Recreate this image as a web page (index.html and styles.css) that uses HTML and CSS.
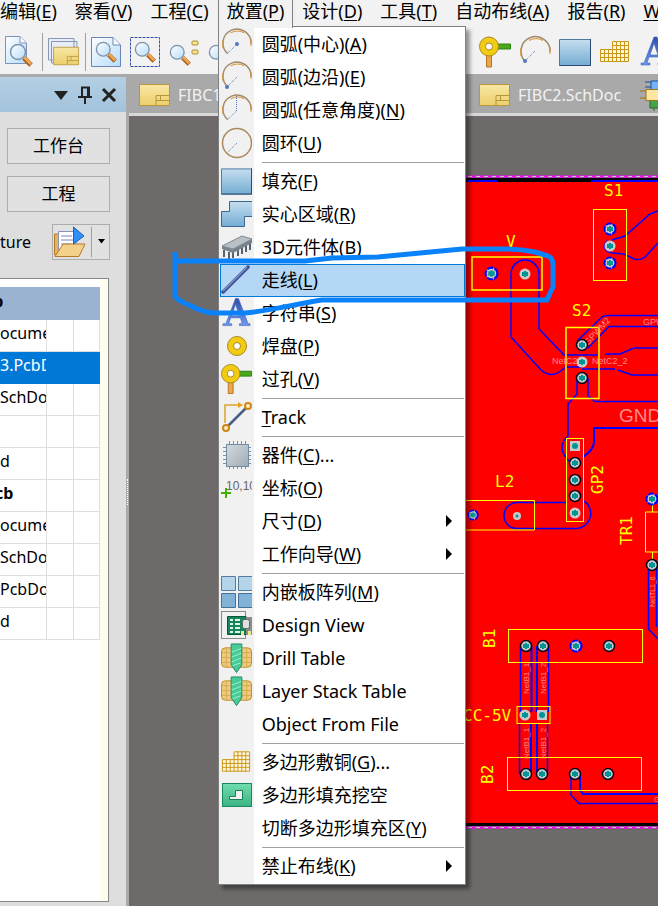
FILE: index.html
```
<!DOCTYPE html>
<html lang="zh-CN">
<head>
<meta charset="UTF-8">
<meta name="viewport" content="width=device-width, initial-scale=1.0">
<title>PCB Editor</title>
<link rel="stylesheet" href="styles.css">
</head>
<body>

<!-- shared icons -->
<svg class="defs" aria-hidden="true">
<defs>
<linearGradient id="blue" x1="0" y1="0" x2="0" y2="1"><stop offset="0" stop-color="#c5deef"/><stop offset="1" stop-color="#74add2"/></linearGradient>
<linearGradient id="sheet" x1="0" y1="0" x2="1" y2="1"><stop offset="0" stop-color="#ffffff"/><stop offset="1" stop-color="#b5dcfa"/></linearGradient>
<linearGradient id="gold" x1="0" y1="0" x2="0" y2="1"><stop offset="0" stop-color="#f8e6a4"/><stop offset="1" stop-color="#ecd06c"/></linearGradient>
<linearGradient id="green" x1="0" y1="0" x2="0" y2="1"><stop offset="0" stop-color="#72dcae"/><stop offset="1" stop-color="#3cb384"/></linearGradient>
<linearGradient id="letter" x1="0" y1="0" x2="0" y2="1"><stop offset="0" stop-color="#2f4da8"/><stop offset="1" stop-color="#6b9af0"/></linearGradient>
<linearGradient id="chip" x1="0" y1="0" x2="1" y2="1"><stop offset="0" stop-color="#d5dadd"/><stop offset="1" stop-color="#9eabb5"/></linearGradient>
<symbol id="glass" viewBox="0 0 24 24">
<path d="M15 15L22 22" stroke="#a85f20" stroke-width="5"/>
<path d="M15 14L22 21" stroke="#eda750" stroke-width="3"/>
<circle cx="9" cy="9" r="7.5" fill="url(#sheet)" stroke="#7d93ab" stroke-width="1.5"/>
</symbol>
<symbol id="arc" viewBox="0 0 32 32">
<path d="M7 26A14.5 14.5 0 1 1 31 16" fill="none" stroke="#a28a68" stroke-width="1.5"/>
<path d="M10 4.500A14.500 14.500 0 0 1 24 4.500M31 11V18M2 12V20" fill="none" stroke="#d98f2b"/>
</symbol>
<symbol id="rect" viewBox="0 0 32 32">
<path d="M.5 3.500H32V29.500H.5z" fill="url(#blue)" stroke="#4a7ba3"/>
<path d="M.5 29.500H31.500V3" fill="none" stroke="#2b4a72"/>
</symbol>
<symbol id="via" viewBox="0 0 32 32">
<path d="M18 8H31.500V13H18z" fill="#4aa81c" stroke="#2f8410"/>
<path d="M7.500 18H12.500V31H7.500z" fill="#eca748" stroke="#b97424"/>
<circle cx="10" cy="10.500" r="9.500" fill="#f3cc12" stroke="#a98724"/>
<circle cx="10" cy="10.500" r="3.500" fill="#fff" stroke="#a98724"/>
</symbol>
<symbol id="grid" viewBox="0 0 32 32">
<path d="M1.500 13.500H13.500V5.500H29.500V25.500H1.500zM5.500 13V26M9.500 13V26M13.500 13V26M17.500 5V26M21.500 5V26M25.500 5V26M1 17.500H30M1 21.500H30M13 9.500H30M13 13.500H30" fill="#fff6dc" stroke="#cb971a"/>
</symbol>
<symbol id="letter-a" viewBox="0 0 32 32">
<path d="M15 1H18L28 27H30V29H19V27H22L20 21H10L8 27H11V29H2V27H5zM15 7L11 19H19z" fill="url(#letter)" stroke="#3d62ba" stroke-width=".6"/>
</symbol>
<symbol id="doc" viewBox="0 0 32 24">
<path d="M.5 1.500H30.500V22.500H.5z" fill="url(#gold)" stroke="#b8973c"/>
<path d="M17 22V12.500H30M17 17.500H30M21.500 12.500V17" fill="none" stroke="#b8973c"/>
</symbol>
<symbol id="drill" viewBox="0 0 32 32">
<rect x=".5" y="5.500" width="31" height="20" rx="4" fill="#eecb83" stroke="#bd8c22"/>
<path d="M5.500 6V25M26.500 6V25M1 10.500H31M1 15.500H31M1 20.500H31" stroke="#dba848"/>
<path d="M10.500 1.500H21.500V23L16 31L10.500 23z" fill="#49cb98" stroke="#218963"/>
<path d="M11 10L21 6M11 15L21 11M11 20L21 16M12 24L20 21" stroke="#a0edcc"/>
</symbol>
<symbol id="pad" viewBox="-7 -7 14 14">
<circle r="5.500" fill="#c8c8c8" stroke="#080018" stroke-width="1.500"/>
<path d="M-3 -2H-1V-3H1V-2H3V2H1V3H-1V2H-3z" fill="#009494"/>
</symbol>
<symbol id="pad-blue" viewBox="-7 -7 14 14">
<circle r="5.500" fill="#c8c8c8" stroke="#0000ff" stroke-width="2" stroke-dasharray="6 1"/>
<path d="M-3 -2H-1V-3H1V-2H3V2H1V3H-1V2H-3z" fill="#009494"/>
</symbol>
<symbol id="pad-plain" viewBox="-7 -7 14 14">
<circle r="5.500" fill="#c8c8c8"/>
<path d="M-3 -2H-1V-3H1V-2H3V2H1V3H-1V2H-3z" fill="#009494"/>
</symbol>
</defs>
</svg>

<div class="app">

<nav class="menubar">
<button>编辑(<u>E</u>)</button>
<button>察看(<u>V</u>)</button>
<button>工程(<u>C</u>)</button>
<div class="open">
<button>放置(<u>P</u>)</button>
<div class="menu">
<button><svg><use href="#arc"/><path d="M16 16L7 25" class="dots"/><circle cx="16" cy="16" r="2" fill="#5376bd"/></svg><span>圆弧(中心)(<u>A</u>)</span></button>
<button><svg><use href="#arc"/><path d="M16 16L7 25" class="dots"/><circle cx="6" cy="26" r="2" fill="#5376bd"/></svg><span>圆弧(边沿)(<u>E</u>)</span></button>
<button><svg><use href="#arc"/><path d="M15.500 2V17L7 25" class="dots"/></svg><span>圆弧(任意角度)(<u>N</u>)</span></button>
<button><svg><circle cx="16" cy="16" r="14.500" fill="none" stroke="#a98a5c" stroke-width="1.500"/><path d="M16 16L6 26" class="dots"/></svg><span>圆环(<u>U</u>)</span></button>
<hr>
<button><svg><use href="#rect"/></svg><span>填充(<u>F</u>)</span></button>
<button><svg><path d="M8.500 3.500H32V18.500H23.500V28.500H.5V13.500H8.500z" fill="url(#blue)" stroke="#386891"/></svg><span>实心区域(<u>R</u>)</span></button>
<button><svg><path d="M12 20V27M17 18V25M21 16V23M25 14V21M29 12V19M3 19V26M8 21V28" stroke="#59626b" stroke-width="2"/><path d="M1 15L21 5L31 8V12L12 22L1 18z" fill="#77828b"/><path d="M1 15L21 5L31 8L12 18z" fill="#b9c0c5" stroke="#848e96"/></svg><span>3D元件体(<u>B</u>)</span></button>
<button class="selected"><svg><path d="M2 28L27 3" stroke="#3d4f91" stroke-width="3.500" stroke-linecap="round"/><path d="M2 27L26 3" stroke="#8095cc" stroke-width="1.500"/></svg><span>走线(<u>L</u>)</span></button>
<button><svg><use href="#letter-a"/></svg><span>字符串(<u>S</u>)</span></button>
<button><svg><circle cx="16" cy="16" r="9.500" fill="#f3cc12" stroke="#a98724"/><circle cx="16" cy="16" r="3.500" fill="#fff" stroke="#a98724"/></svg><span>焊盘(<u>P</u>)</span></button>
<button><svg><use href="#via"/></svg><span>过孔(<u>V</u>)</span></button>
<hr>
<button><svg><path d="M5 27L27 5" stroke="#4a5f86" stroke-width="2.500"/><path d="M4 22V4H18" fill="none" stroke="#e0a324" stroke-width="1.500"/><path d="M17 1L22 4L17 7z" fill="#e0a324"/><circle cx="5" cy="27" r="3" fill="#fff0c0" stroke="#cc8718" stroke-width="2"/><circle cx="27" cy="5" r="3" fill="#fff0c0" stroke="#cc8718" stroke-width="2"/></svg><span><u>T</u>rack</span></button>
<hr>
<button><svg><path d="M8.500 2V30M12.500 2V30M16.500 2V30M20.500 2V30M24.500 2V30M2 8.500H30M2 12.500H30M2 16.500H30M2 20.500H30M2 24.500H30" stroke="#7590aa"/><rect x="5.500" y="5.500" width="22" height="22" fill="url(#chip)" stroke="#728ca2"/></svg><span>器件(<u>C</u>)...</span></button>
<button><svg><text x="5" y="18" class="coords">10,10</text><path d="M0 21H10M5 16V26" stroke="#42b400" stroke-width="2"/></svg><span>坐标(<u>O</u>)</span></button>
<button class="sub"><svg></svg><span>尺寸(<u>D</u>)</span></button>
<button class="sub"><svg></svg><span>工作向导(<u>W</u>)</span></button>
<hr>
<button><svg><path d="M.5 .5H14.500V14.500H.5zM17.500 .5H32V14.500H17.500z" fill="#b4d4ea" stroke="#527ca4"/><path d="M.5 17.500H14.500V31.500H.5zM17.500 17.500H32V31.500H17.500z" fill="#82b3d7" stroke="#45709a"/></svg><span>内嵌板阵列(<u>M</u>)</span></button>
<button><svg><path d="M.5 2.500H24.500V29.500H.5z" fill="none" stroke="#222" stroke-dasharray="1 1"/><path d="M6.500 7.500H25V25.500H6.500z" fill="#16855c" stroke="#055837"/><path d="M25 8H31V26H25z" fill="#8b8b8b"/><path d="M9 11H12M14 11H19M9 15H12M14 15H19M9 19H12M14 19H19M9 23H12M14 23H19" stroke="#dff6e7" stroke-width="2"/><rect x="21.500" y="10.500" width="7" height="9" rx="2" fill="#dbe3df" stroke="#666"/><path d="M20 22H23V26H20M27 22H30V26H27" fill="#f0e88a"/></svg><span>Design View</span></button>
<button><svg><use href="#drill"/></svg><span>Drill Table</span></button>
<button><svg><use href="#drill"/></svg><span>Layer Stack Table</span></button>
<button><svg></svg><span>Object From File</span></button>
<hr>
<button><svg><use href="#grid"/></svg><span>多边形敷铜(<u>G</u>)...</span></button>
<button><svg><rect x="1.500" y="4.500" width="29" height="23" fill="url(#green)" stroke="#198a5f"/><path d="M8.500 20.500V17.500H14.500V11.500H21.500V20.500z" fill="#f2f2f2" stroke="#178054"/></svg><span>多边形填充挖空</span></button>
<button><svg></svg><span>切断多边形填充区(<u>Y</u>)</span></button>
<hr>
<button class="sub"><svg></svg><span>禁止布线(<u>K</u>)</span></button>
</div>
</div>
<button>设计(<u>D</u>)</button>
<button>工具(<u>T</u>)</button>
<button>自动布线(<u>A</u>)</button>
<button>报告(<u>R</u>)</button>
<button><u>W</u></button>
</nav>

<div class="toolbar">
<div class="tools">
<button aria-label="Preview"><svg><path d="M.5 1.500H15L21.500 8V28.500H.5z" fill="url(#sheet)" stroke="#7d92ba"/><path d="M15 1.500V8H21" fill="#fff" stroke="#7d92ba"/><use href="#glass" x="4" y="8" width="24" height="24"/></svg></button>
<i></i>
<button aria-label="Documents"><svg><path d="M.5 3.500H26V25H.5zM3.500 6.500H29V28H3.500z" fill="#e7eef8" stroke="#8797b5"/><use href="#doc" x="5" y="11" width="27" height="20"/></svg></button>
<i></i>
<button aria-label="Fit document"><svg><path d="M.5 2.500H22L29.500 10V31.500H.5z" fill="url(#sheet)" stroke="#6c84b4"/><path d="M22 2.500V10H29" fill="#fff" stroke="#6c84b4"/><use href="#glass" x="4" y="6" width="22" height="22"/></svg></button>
<button aria-label="Zoom area"><svg><path d="M.5 2.500H29.500V31.500H.5z" fill="none" stroke="#3450a4" stroke-dasharray="3 1"/><use href="#glass" x="4" y="6" width="22" height="22"/></svg></button>
<button aria-label="Zoom selected"><svg><use href="#glass" x="0" y="9" width="22" height="22"/><rect x="23" y="6" width="6" height="4" rx="1" class="tag"/><rect x="23" y="15" width="6" height="4" rx="1" class="tag"/></svg></button>
<button aria-label="Zoom filtered"><svg><use href="#glass" x="0" y="9" width="22" height="22"/></svg></button>
</div>
<div class="tools place">
<button aria-label="Place via"><svg><use href="#via"/></svg></button>
<button aria-label="Place arc"><svg><use href="#arc"/><path d="M16 16L7 25" class="dots"/><circle cx="6" cy="26" r="2" fill="#5376bd"/></svg></button>
<button aria-label="Place fill"><svg><use href="#rect"/></svg></button>
<button aria-label="Place polygon"><svg><use href="#grid"/></svg></button>
<button aria-label="Place string"><svg><use href="#letter-a"/></svg></button>
</div>
</div>

<div class="main">

<aside class="panel">
<div class="panel-title">
<button aria-label="Panel menu"><svg width="16" height="20"><path d="M1 6H15L8 15z" fill="#222"/></svg></button>
<button aria-label="Pin"><svg width="16" height="20"><path d="M4 2.500H13M5 2V12M1 12H15M8 12V19" fill="none" stroke="#222" stroke-width="2"/><path d="M10 2H13V12H10z" fill="#222"/></svg></button>
<button aria-label="Close"><svg width="16" height="20"><path d="M2 4L14 16M14 4L2 16" stroke="#222" stroke-width="3"/></svg></button>
</div>
<div class="panel-body">
<button class="wide">工作台</button>
<button class="wide">工程</button>
<div class="view-row">
<span>ture</span>
<button class="split" aria-label="Open"><svg width="34" height="34"><path d="M1.500 9H8V30H1.500z" fill="#e7b15e" stroke="#b67b29"/><path d="M5.500 6.500H23V25H5.500z" fill="#fff" stroke="#8794b3"/><path d="M8 11H19M8 15H20M8 19H18" stroke="#7a83bf"/><path d="M10 19H32L26 31.500H2z" fill="#f5d08a" stroke="#b67b29"/><path d="M20.500 2L31 11L20.500 19z" fill="#2f91f5" stroke="#1963b8"/></svg><i></i><svg width="12" height="8"><path d="M2 1H9L5.500 5.500z"/></svg></button>
</div>
</div>
<div class="tree">
<table>
<tr class="head"><td><b class="cut">cb</b></td><td></td><td></td></tr>
<tr><td>ocume</td><td></td><td></td></tr>
<tr class="active"><td>3.PcbD</td><td></td><td></td></tr>
<tr><td>SchDoc</td><td></td><td></td></tr>
<tr><td></td><td></td><td></td></tr>
<tr><td>d</td><td></td><td></td></tr>
<tr><td><b class="part">cb</b></td><td></td><td></td></tr>
<tr><td>ocume</td><td></td><td></td></tr>
<tr><td>SchDoc</td><td></td><td></td></tr>
<tr><td>PcbDo</td><td></td><td></td></tr>
<tr><td>d</td><td></td><td></td></tr>
</table>
</div>
</aside>
<div class="splitter"><i></i></div>

<section class="editor">
<div class="tabs">
<button><svg width="32" height="24"><use href="#doc"/></svg>FIBC1</button>
<button class="second"><svg width="32" height="24"><use href="#doc"/></svg>FIBC2.SchDoc</button>
<button aria-label="PCB document"><svg width="32" height="32"><path d="M11 2H32V12H11zM5 3H11M5 8H11" fill="#70b6ff" stroke="#174d94"/><path d="M10 21H32V29H10zM14 29V32M20 29V32M26 29V32" fill="#45a349" stroke="#226b27"/><path d="M6 10.500H32V21.500H6zM0 12H6M0 19H6" fill="#ffe6a0" stroke="#a07516"/></svg></button>
</div>
<div class="canvas">
<svg class="board">
<g transform="translate(-460 -170)">
<rect x="460" y="178" width="1000" height="648" fill="#000"/>
<rect x="460" y="182" width="1000" height="641" fill="#f00"/>
<path d="M460 176.500H1460M460 827.500H1460" stroke="#ff00ff" stroke-width="2"/>
<path d="M460 176.500H1460M460 827.500H1460" stroke="#c8c8c8" stroke-dasharray="4 4"/>
<path d="M467 181H497M591 181H1460" stroke="#00f" stroke-width="2"/>

<g class="trace" stroke-width="1.5">
<path d="M511 337V274A14 14 0 0 1 539 274V329L564 355H598"/>
<path d="M511 337L541 370Q551 379 562 370L566 367H582"/>
<path d="M605 354H620L634 348H658M582 369H615M618 370L632 375H658"/>
<path d="M577 341L602 317Q604 315.500 608 315.500H658M588 348L609 326.500H658"/>
<path d="M577 378V394L568 404V436Q556 447 568 460L573 464M588 378V396L595 401.500H658"/>
<path d="M658 428H594V443Q593 450 583 457" stroke-width="2"/>
<path d="M567 502.500H517A13 13 0 0 0 517 528.500H575A15 15 0 0 0 584 501"/>
<path d="M607 241C602 246 605 252 612 253L624 254L634 259Q641 261 646 256L658 243M612 240L625 236L650 214L658 211"/>
<path d="M648.500 569V629L658 639M656.500 569V627"/>
<path d="M520.500 646V712M548.500 646V712M519.500 723V774M547.500 723V774"/>
<path d="M531.500 646V712M537 646V712M531 723V774M537 723V774" stroke-width="2"/>
<path d="M571 774V795L579 803.500H658"/>
<path d="M580 774V790L583 794H658" stroke-width="2"/>
</g>

<g class="outline">
<rect x="593.500" y="209.500" width="33" height="71"/>
<rect x="472" y="257" width="70" height="33" stroke-width="1.500"/>
<rect x="566" y="327.500" width="33" height="71" stroke-width="1.500"/>
<rect x="566.500" y="438.500" width="17" height="83"/>
<path d="M460 500.500H534.500V530H460"/>
<path d="M658 512H645.500V552H658M652.500 505V512M652.500 552V560"/>
<rect x="508.500" y="629.500" width="134" height="33"/>
<rect x="517" y="706.500" width="33" height="17"/>
<rect x="507.500" y="757.500" width="134" height="33"/>
</g>

<g class="nets">
<text x="552" y="364">NetC2_</text>
<text x="592" y="364">NetC2_2</text>
<text x="643" y="325">GPW</text>
<text transform="translate(588 346) rotate(-48)">GPWM2</text>
<text x="619" y="422" class="gnd">GND</text>
<text transform="translate(529 694) rotate(-90)" class="small">NetB1_1</text>
<text transform="translate(546 694) rotate(-90)" class="small">NetB1_2</text>
<text transform="translate(529 759) rotate(-90)" class="small">NetB1_1</text>
<text transform="translate(546 759) rotate(-90)" class="small">NetB1_2</text>
<text transform="translate(655 607) rotate(-90)" class="tiny">NetTL1_6</text>
<text x="654" y="802" class="tiny">G</text>
</g>

<g>
<use href="#pad-blue" x="603" y="222" width="14" height="14"/>
<use href="#pad-plain" x="603" y="239" width="14" height="14"/>
<use href="#pad-blue" x="603" y="256" width="14" height="14"/>
<use href="#pad-blue" x="484" y="266" width="15" height="15"/>
<use href="#pad-plain" x="518" y="267" width="14" height="14"/>
<use href="#pad" x="575" y="338" width="14" height="14"/>
<use href="#pad-plain" x="575" y="355" width="14" height="14"/>
<use href="#pad" x="575" y="371" width="14" height="14"/>
<rect x="570" y="441" width="10" height="10" fill="#c8c8c8"/><circle cx="575" cy="446" r="3" fill="#009494"/>
<use href="#pad" x="568" y="456" width="14" height="14"/>
<use href="#pad" x="568" y="473" width="14" height="14"/>
<use href="#pad" x="568" y="489" width="14" height="14"/>
<use href="#pad-plain" x="568" y="506" width="14" height="14"/>
<use href="#pad-blue" x="467" y="509" width="12" height="12"/>
<circle cx="517" cy="516" r="4" fill="#c8c8c8"/><circle cx="517" cy="516" r="1.500" fill="#009494"/>
<use href="#pad-blue" x="645" y="492" width="14" height="14"/>
<use href="#pad" x="645" y="558" width="14" height="14"/>
<use href="#pad" x="519" y="639" width="14" height="14"/>
<use href="#pad" x="536" y="639" width="14" height="14"/>
<use href="#pad-blue" x="569" y="639" width="14" height="14"/>
<use href="#pad" x="602" y="639" width="14" height="14"/>
<use href="#pad-plain" x="518" y="708" width="14" height="14"/>
<rect x="537" y="710" width="10" height="10" fill="#c8c8c8"/><circle cx="542" cy="715" r="3" fill="#009494"/>
<use href="#pad" x="519" y="767" width="14" height="14"/>
<use href="#pad" x="535" y="767" width="14" height="14"/>
<use href="#pad" x="568" y="767" width="14" height="14"/>
<use href="#pad" x="601" y="767" width="14" height="14"/>
</g>

<g class="labels">
<text x="604" y="196">S1</text>
<text x="506" y="247">V</text>
<text x="572" y="316">S2</text>
<text x="495" y="487">L2</text>
<text transform="translate(603 494) rotate(-90)">GP2</text>
<text transform="translate(632 545) rotate(-90)">TR1</text>
<text transform="translate(495 648) rotate(-90)">B1</text>
<text transform="translate(493 784) rotate(-90)">B2</text>
<text x="463" y="721">CC-5V</text>
</g>
</g>
</svg>
</div>
</section>

</div>
</div>

<!-- freehand marker -->
<svg class="marker" width="400" height="80">
<path d="M10 7V51C14 57 20 58 26 61S42 68 50 68H80C105 66 135 58 157 55H382L385 48L388 42V20Q388 13 383 11L370 7C360 5 355 4 340 4H297L213 12L167 13L140 16H10"/>
</svg>

</body>
</html>
```

FILE: styles.css
```
* {
box-sizing: border-box;
}
body {
margin: 0;
overflow: hidden;
font-family: "Noto Sans", "Noto Sans CJK SC", sans-serif;
font-size: 18px;
color: #000;
background: #f2f2f2;
}
button {
border: 0;
padding: 0;
background: none;
font: inherit;
color: inherit;
}
svg {
display: block;
flex: none;
}
.defs {
position: absolute;
width: 0;
height: 0;
}
u {
text-underline-offset: 2px;
text-decoration-thickness: 1px;
}
.app {
display: flex;
flex-direction: column;
height: 100vh;
}

/* menu bar */
.menubar {
display: flex;
height: 26px;
margin-left: -9px;
line-height: 22px;
white-space: nowrap;
}
.menubar > button, .open > button {
height: 26px;
padding: 0 9px 4px;
}
.open {
position: relative;
}
.open > button {
position: relative;
z-index: 3;
height: 28px;
padding: 0 8px 6px;
border-left: 1px solid #808080;
border-right: 1px solid #808080;
background: #f2f2f2;
}
.menu {
position: absolute;
z-index: 2;
top: 26px;
left: 0;
width: 248px;
padding: 1px 1px 1px 0;
border: 1px solid #808080;
background: linear-gradient(to right, #f1f1f1 35px, #fff 35px);
box-shadow: 4px 4px 4px rgba(0, 0, 0, 0.4);
}
.menu button {
display: flex;
align-items: center;
gap: 10px;
width: 100%;
height: 33px;
padding: 0 0 1px 2px;
text-align: left;
}
.menu button svg {
width: 31px;
height: 32px;
}
.menu .selected {
width: 245px;
margin-left: 1px;
padding-left: 0;
border: 1px solid #0078d7;
background: #b3d7f4;
}
.menu .sub::after {
content: "";
margin-left: auto;
margin-right: 12px;
border: 6px solid transparent;
border-left-color: #000;
border-right: 0;
}
.menu hr {
height: 1px;
margin: 2px 0 2px 43px;
border: 0;
background: #a0a0a0;
}
.dots {
fill: none;
stroke: #5376bd;
stroke-dasharray: 1 1;
}
.coords {
font-family: "Liberation Sans", sans-serif;
font-size: 12px;
fill: #666;
}

/* toolbar */
.toolbar {
display: flex;
align-items: center;
height: 48px;
padding: 4px 0 0 5px;
}
.tools {
display: flex;
flex: none;
align-items: center;
gap: 7px;
width: 474px;
}
.tools svg {
width: 32px;
height: 34px;
}
.tools i {
width: 1px;
height: 38px;
margin: 0 -2px;
background: #a0a0a0;
}
.tools.place {
gap: 8px;
}
.tag {
fill: #fbe68c;
stroke: #a78c30;
}

/* projects panel */
.main {
display: flex;
flex: 1;
min-height: 0;
background: #a9a9a9;
padding-top: 3px;
}
.panel {
display: flex;
flex-direction: column;
width: 126px;
background: #dedede;
}
.panel-title {
display: flex;
justify-content: flex-end;
align-items: center;
gap: 8px;
height: 35px;
padding-right: 9px;
background: linear-gradient(#b3cfe3, #a3c3dc);
}
.panel-body {
display: flex;
flex-direction: column;
gap: 12px;
padding: 16px 16px 18px 0;
font-size: 17px;
}
.wide, .split {
height: 36px;
border: 1px solid #adadad;
background: #e1e1e1;
}
.wide {
margin-left: 7px;
padding-bottom: 4px;
}
.view-row {
display: flex;
align-items: center;
justify-content: space-between;
font-size: 16px;
}
.split {
display: flex;
align-items: center;
width: 58px;
}
.split i {
width: 1px;
height: 30px;
margin: 0 4px;
background: #a0a0a0;
}
.tree {
flex: 1;
min-height: 0;
width: 109px;
margin-bottom: 4px;
padding: 8px 8px 0 0;
border: 1px solid #888;
border-left: 0;
background: linear-gradient(to right, #fff 100px, #fffcf0 100px);
}
.tree table {
width: 100px;
table-layout: fixed;
border-collapse: collapse;
font-size: 16px;
line-height: 24px;
}
.tree td {
height: 32px;
padding: 0 0 6px;
border: 1px solid #dedede;
border-left: 0;
overflow: hidden;
white-space: nowrap;
}
.tree td:first-child {
width: 46px;
}
.tree td:nth-child(2) {
width: 27px;
}
.tree .head td {
border-color: #9ab3d1;
background: #9ab3d1;
}
.tree .active td {
border-color: #0078d7;
background: #0078d7;
color: #fff;
}
.cut {
margin-left: -15px;
}
.part {
margin-left: -5px;
}
.splitter {
display: flex;
align-items: center;
width: 3px;
}
.splitter i {
height: 26px;
margin-left: 1px;
border-left: 1px dotted #fff;
}

/* editor */
.editor {
display: flex;
flex-direction: column;
flex: 1;
min-width: 0;
}
.tabs {
display: flex;
height: 39px;
padding-left: 10px;
border-bottom: 3px solid #d8d8d8;
overflow: hidden;
font-size: 16px;
color: #f2f2f2;
}
.tabs button {
display: flex;
flex: none;
align-items: center;
gap: 7px;
min-width: 161px;
}
.tabs .second {
margin-left: 179px;
}
.canvas {
flex: 1;
min-height: 0;
padding: 54px 0 0 331px;
background: #6e6a69;
}
.board {
width: 100%;
height: 660px;
}
.trace {
fill: none;
stroke: #0000ff;
}
.outline {
fill: none;
stroke: #ffff00;
}
.labels {
font-family: "DejaVu Sans Mono", monospace;
font-size: 16px;
fill: #ffff00;
}
.nets {
font-family: "Liberation Sans", sans-serif;
font-size: 9px;
fill: #ff8c8c;
}
.nets .gnd {
font-size: 19px;
}
.nets .small {
font-size: 8px;
}
.nets .tiny {
font-size: 7px;
}

.marker {
position: absolute;
z-index: 5;
top: 245px;
left: 165px;
pointer-events: none;
}
.marker path {
fill: none;
stroke: #0a82fa;
stroke-width: 5px;
stroke-linejoin: round;
}
```
